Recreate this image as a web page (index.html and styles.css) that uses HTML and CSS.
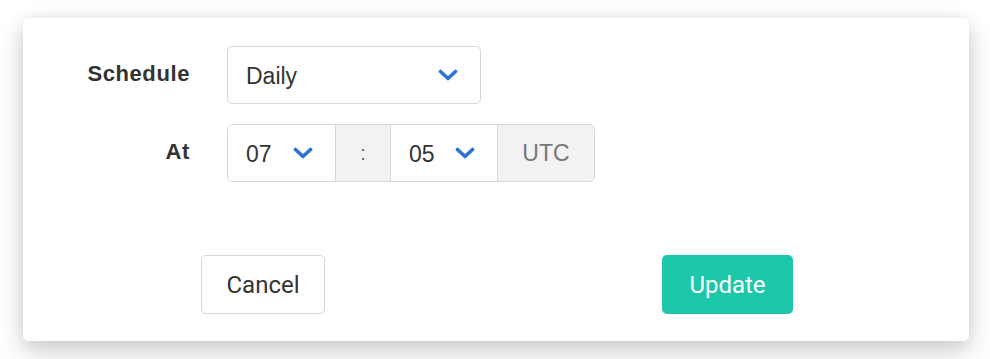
FILE: index.html
```html
<!DOCTYPE html>
<html>
<head>
<meta charset="utf-8">
<link rel="stylesheet" href="styles.css">
</head>
<body>
<div class="card">
  <div class="form">
    <div class="label">Schedule</div>
    <div class="select wide">
      <span class="val">Daily</span>
      <svg class="chev" width="20" height="12" viewBox="0 0 20 12"><path d="M2.5 2.5 L10 9.5 L17.5 2.5" fill="none" stroke="#2b73d9" stroke-width="3.6" stroke-linecap="round" stroke-linejoin="round"/></svg>
    </div>
    <div class="label">At</div>
    <div class="group">
      <div class="seg sel">
        <span class="val">07</span>
        <svg class="chev" width="20" height="12" viewBox="0 0 20 12"><path d="M2.5 2.5 L10 9.5 L17.5 2.5" fill="none" stroke="#2b73d9" stroke-width="3.6" stroke-linecap="round" stroke-linejoin="round"/></svg>
      </div>
      <div class="seg addon colon">:</div>
      <div class="seg sel">
        <span class="val">05</span>
        <svg class="chev" width="20" height="12" viewBox="0 0 20 12"><path d="M2.5 2.5 L10 9.5 L17.5 2.5" fill="none" stroke="#2b73d9" stroke-width="3.6" stroke-linecap="round" stroke-linejoin="round"/></svg>
      </div>
      <div class="seg addon utc">UTC</div>
    </div>
  </div>
  <div class="actions">
    <button class="btn cancel">Cancel</button>
    <button class="btn update">Update</button>
  </div>
</div>
</body>
</html>
```
FILE: styles.css
```css
html, body {
  margin: 0;
  padding: 0;
  background: #ffffff;
}
body {
  padding: 18px 21px 0 23px;
  height: 359px;
  box-sizing: border-box;
  font-family: "Liberation Sans", Arial, sans-serif;
  color: #333;
}
.card {
  width: 946px;
  height: 323px;
  box-sizing: border-box;
  background: #fff;
  border-radius: 5px;
  box-shadow: 0 10px 26px rgba(0,0,0,0.2), 0 0 14px rgba(0,0,0,0.05);
  padding: 28px 0 0 0;
}
.form {
  display: grid;
  grid-template-columns: 167px auto;
  column-gap: 37px;
  row-gap: 20px;
  align-items: center;
  justify-items: start;
}
.label {
  justify-self: end;
  font-weight: bold;
  font-size: 22px;
  color: #333;
  letter-spacing: 0.6px;
  margin-top: -2px;
}
.select {
  box-sizing: border-box;
  height: 58px;
  border: 1px solid #d8d8d8;
  border-radius: 5px;
  display: flex;
  align-items: center;
  justify-content: space-between;
  font-size: 23px;
}
.wide {
  width: 254px;
  padding: 0 22px 0 18px;
}
.group {
  display: flex;
  height: 58px;
  box-sizing: border-box;
  border: 1px solid #d8d8d8;
  border-radius: 5px;
  overflow: hidden;
  font-size: 23px;
}
.seg {
  display: flex;
  align-items: center;
  box-sizing: border-box;
  border-right: 1px solid #d8d8d8;
}
.seg:last-child {
  border-right: none;
}
.sel {
  width: 108px;
  padding: 0 22px 0 18px;
  justify-content: space-between;
  background: #fff;
}
.group .sel:nth-child(3) {
  width: 107px;
}
.addon {
  background: #f2f2f2;
  justify-content: center;
  color: #777;
}
.colon {
  width: 55px;
  font-size: 20px;
  color: #666;
}
.utc {
  width: 96px;
}
.val {
  color: #333;
  margin-top: 2px;
}
.chev {
  display: block;
}
.actions {
  margin-top: 73px;
  margin-left: 178px;
  width: 592px;
  display: flex;
  justify-content: space-between;
}
.btn {
  height: 59px;
  border-radius: 5px;
  font-family: Roboto, "Liberation Sans", sans-serif;
  font-size: 24px;
  cursor: pointer;
}
.cancel {
  width: 124px;
  background: #fff;
  border: 1px solid #d6d6d6;
  color: #333;
}
.update {
  width: 131px;
  background: #1cc8a9;
  border: none;
  color: #fff;
}
```
